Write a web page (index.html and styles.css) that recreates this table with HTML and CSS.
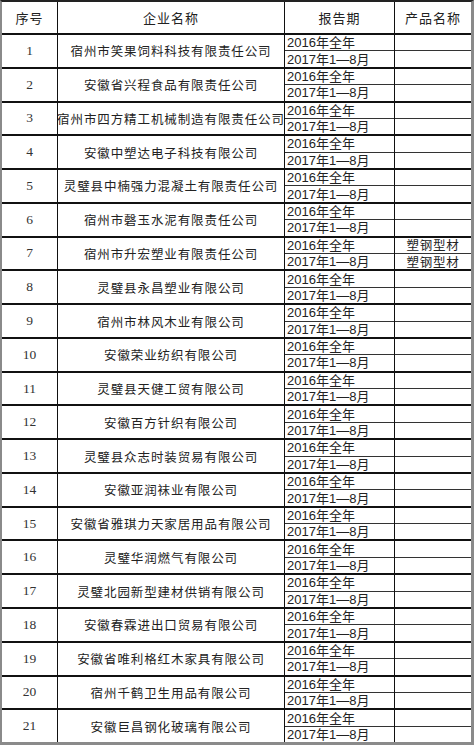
FILE: index.html
```html
<!DOCTYPE html>
<html lang="zh">
<head>
<meta charset="utf-8">
<link rel="stylesheet" href="styles.css">
</head>
<body>
<div class="sheet">
  <div class="head">
    <div class="c num">序号</div>
    <div class="c name hname">企业名称</div>
    <div class="c per hper">报告期</div>
    <div class="c prod hprod">产品名称</div>
  </div>
  <div class="row"><div class="c num">1</div><div class="c name"><span>宿州市笑果饲料科技有限责任公司</span></div><div class="per"><div class="sub">2016年全年</div><div class="sub">2017年1—8月</div></div><div class="prod"><div class="sub"></div><div class="sub"></div></div></div>
  <div class="row"><div class="c num">2</div><div class="c name"><span>安徽省兴程食品有限责任公司</span></div><div class="per"><div class="sub">2016年全年</div><div class="sub">2017年1—8月</div></div><div class="prod"><div class="sub"></div><div class="sub"></div></div></div>
  <div class="row"><div class="c num">3</div><div class="c name"><span>宿州市四方精工机械制造有限责任公司</span></div><div class="per"><div class="sub">2016年全年</div><div class="sub">2017年1—8月</div></div><div class="prod"><div class="sub"></div><div class="sub"></div></div></div>
  <div class="row"><div class="c num">4</div><div class="c name"><span>安徽中塑达电子科技有限公司</span></div><div class="per"><div class="sub">2016年全年</div><div class="sub">2017年1—8月</div></div><div class="prod"><div class="sub"></div><div class="sub"></div></div></div>
  <div class="row"><div class="c num">5</div><div class="c name"><span>灵璧县中楠强力混凝土有限责任公司</span></div><div class="per"><div class="sub">2016年全年</div><div class="sub">2017年1—8月</div></div><div class="prod"><div class="sub"></div><div class="sub"></div></div></div>
  <div class="row"><div class="c num">6</div><div class="c name"><span>宿州市磬玉水泥有限责任公司</span></div><div class="per"><div class="sub">2016年全年</div><div class="sub">2017年1—8月</div></div><div class="prod"><div class="sub"></div><div class="sub"></div></div></div>
  <div class="row"><div class="c num">7</div><div class="c name"><span>宿州市升宏塑业有限责任公司</span></div><div class="per"><div class="sub">2016年全年</div><div class="sub">2017年1—8月</div></div><div class="prod"><div class="sub"><span class="pt">塑钢型材</span></div><div class="sub"><span class="pt">塑钢型材</span></div></div></div>
  <div class="row"><div class="c num">8</div><div class="c name"><span>灵璧县永昌塑业有限公司</span></div><div class="per"><div class="sub">2016年全年</div><div class="sub">2017年1—8月</div></div><div class="prod"><div class="sub"></div><div class="sub"></div></div></div>
  <div class="row"><div class="c num">9</div><div class="c name"><span>宿州市林风木业有限公司</span></div><div class="per"><div class="sub">2016年全年</div><div class="sub">2017年1—8月</div></div><div class="prod"><div class="sub"></div><div class="sub"></div></div></div>
  <div class="row"><div class="c num">10</div><div class="c name"><span>安徽荣业纺织有限公司</span></div><div class="per"><div class="sub">2016年全年</div><div class="sub">2017年1—8月</div></div><div class="prod"><div class="sub"></div><div class="sub"></div></div></div>
  <div class="row"><div class="c num">11</div><div class="c name"><span>灵璧县天健工贸有限公司</span></div><div class="per"><div class="sub">2016年全年</div><div class="sub">2017年1—8月</div></div><div class="prod"><div class="sub"></div><div class="sub"></div></div></div>
  <div class="row"><div class="c num">12</div><div class="c name"><span>安徽百方针织有限公司</span></div><div class="per"><div class="sub">2016年全年</div><div class="sub">2017年1—8月</div></div><div class="prod"><div class="sub"></div><div class="sub"></div></div></div>
  <div class="row"><div class="c num">13</div><div class="c name"><span>灵璧县众志时装贸易有限公司</span></div><div class="per"><div class="sub">2016年全年</div><div class="sub">2017年1—8月</div></div><div class="prod"><div class="sub"></div><div class="sub"></div></div></div>
  <div class="row"><div class="c num">14</div><div class="c name"><span>安徽亚润袜业有限公司</span></div><div class="per"><div class="sub">2016年全年</div><div class="sub">2017年1—8月</div></div><div class="prod"><div class="sub"></div><div class="sub"></div></div></div>
  <div class="row"><div class="c num">15</div><div class="c name"><span>安徽省雅琪力天家居用品有限公司</span></div><div class="per"><div class="sub">2016年全年</div><div class="sub">2017年1—8月</div></div><div class="prod"><div class="sub"></div><div class="sub"></div></div></div>
  <div class="row"><div class="c num">16</div><div class="c name"><span>灵璧华润燃气有限公司</span></div><div class="per"><div class="sub">2016年全年</div><div class="sub">2017年1—8月</div></div><div class="prod"><div class="sub"></div><div class="sub"></div></div></div>
  <div class="row"><div class="c num">17</div><div class="c name"><span>灵璧北园新型建材供销有限公司</span></div><div class="per"><div class="sub">2016年全年</div><div class="sub">2017年1—8月</div></div><div class="prod"><div class="sub"></div><div class="sub"></div></div></div>
  <div class="row"><div class="c num">18</div><div class="c name"><span>安徽春霖进出口贸易有限公司</span></div><div class="per"><div class="sub">2016年全年</div><div class="sub">2017年1—8月</div></div><div class="prod"><div class="sub"></div><div class="sub"></div></div></div>
  <div class="row"><div class="c num">19</div><div class="c name"><span>安徽省唯利格红木家具有限公司</span></div><div class="per"><div class="sub">2016年全年</div><div class="sub">2017年1—8月</div></div><div class="prod"><div class="sub"></div><div class="sub"></div></div></div>
  <div class="row"><div class="c num">20</div><div class="c name"><span>宿州千鹤卫生用品有限公司</span></div><div class="per"><div class="sub">2016年全年</div><div class="sub">2017年1—8月</div></div><div class="prod"><div class="sub"></div><div class="sub"></div></div></div>
  <div class="row"><div class="c num">21</div><div class="c name"><span>安徽巨昌钢化玻璃有限公司</span></div><div class="per"><div class="sub">2016年全年</div><div class="sub">2017年1—8月</div></div><div class="prod"><div class="sub"></div><div class="sub"></div></div></div>
</div>
</body>
</html>
```

FILE: styles.css
```css
html, body {
  margin: 0;
  padding: 0;
  background: #ffffff;
}

.sheet {
  box-sizing: border-box;
  width: 474px;
  height: 745px;
  display: flex;
  flex-direction: column;
  border-left: 2px solid #8a8a8a;
  border-top: 2px solid #222222;
  border-right: 3px solid #8a8a8a;
  border-bottom: 3px solid #8a8a8a;
  color: #222222;
  font-family: "Noto Sans CJK SC", sans-serif;
  overflow: hidden;
}

.head {
  display: flex;
  height: 31px;
  flex: none;
}

.row {
  display: flex;
  flex: 1 1 0;
  min-height: 0;
  border-top: 2px solid #111111;
}

.c {
  display: flex;
  align-items: center;
  justify-content: center;
  box-sizing: border-box;
  border-right: 1px solid #111111;
  overflow: hidden;
  white-space: nowrap;
}

.num {
  width: 56px;
  flex: none;
  box-sizing: border-box;
  border-right: 1px solid #111111;
  font-family: "Liberation Serif", "Noto Sans CJK SC", serif;
  font-size: 13.5px;
  color: #333333;
}

.head .num {
  font-family: "Noto Sans CJK SC", sans-serif;
  font-size: 13px;
  letter-spacing: 1px;
  color: #222222;
}

.name {
  width: 227px;
  flex: none;
  font-size: 12.5px;
  letter-spacing: 0.9px;
}

.name span {
  flex: none;
}

.hname {
  font-size: 13px;
  letter-spacing: 1px;
}

.per {
  width: 110px;
  flex: none;
  box-sizing: border-box;
  border-right: 1px solid #111111;
  display: flex;
  flex-direction: column;
  font-family: "Liberation Sans", "Noto Sans CJK SC", sans-serif;
  font-size: 13px;
}

.hper {
  font-family: "Noto Sans CJK SC", sans-serif;
  letter-spacing: 1px;
}

.prod {
  flex: 1 1 auto;
  display: flex;
  flex-direction: column;
  font-size: 13px;
  letter-spacing: 0.8px;
}

.hprod {
  border-right: none;
  letter-spacing: 1px;
}

.sub {
  flex: 1 1 0;
  min-height: 0;
  display: flex;
  align-items: center;
  white-space: nowrap;
  overflow: hidden;
  line-height: 1;
}

.sub:first-child {
  border-bottom: 1px solid #333333;
}

.per .sub {
  padding-left: 2px;
}

.prod .sub {
  justify-content: center;
  overflow: visible;
}

.pt {
  font-size: 12.5px;
  line-height: 12px;
}
```
